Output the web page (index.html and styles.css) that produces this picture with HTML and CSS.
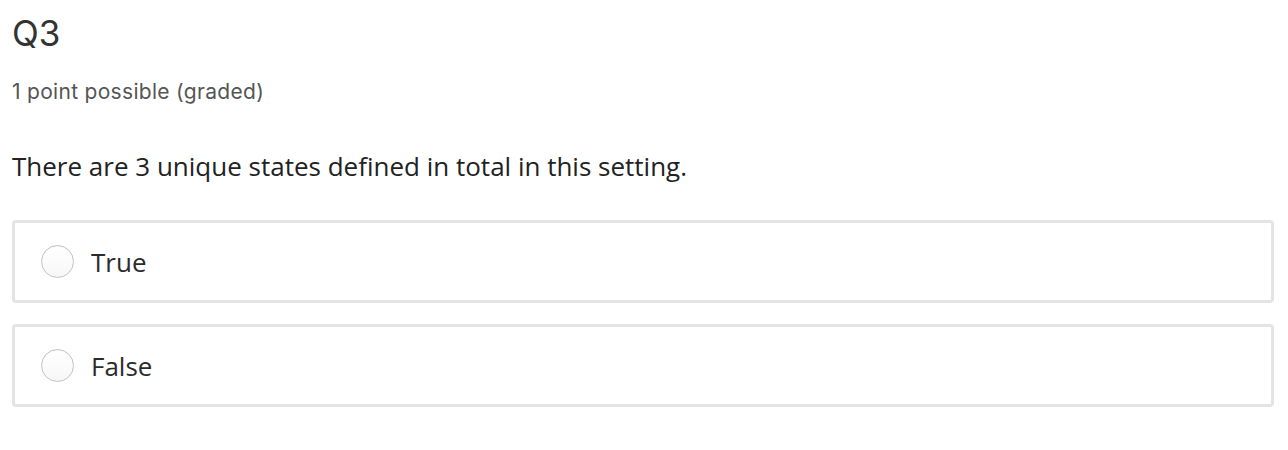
FILE: index.html
```html
<!DOCTYPE html>
<html>
<head>
<meta charset="utf-8">
<link rel="stylesheet" href="styles.css">
</head>
<body>
<div class="problem">
  <h3 class="title">Q3</h3>
  <div class="meta">1 point possible (graded)</div>
  <p class="prompt">There are 3 unique states defined in total in this setting.</p>
  <div class="choices">
    <label class="choice"><span class="radio"></span><span class="label">True</span></label>
    <label class="choice"><span class="radio"></span><span class="label">False</span></label>
  </div>
</div>
</body>
</html>
```
FILE: styles.css
```css
html, body { margin: 0; padding: 0; background: #fff; }
.problem { padding: 0 14px 0 12px; }
.title {
  margin: 0;
  padding-top: 12px;
  font-family: Inter, "Open Sans", sans-serif;
  font-weight: 400;
  font-size: 35px;
  line-height: 42px;
  color: #333;
}
.meta {
  margin-top: 26px;
  font-family: Inter, sans-serif;
  font-size: 21px;
  line-height: 24px;
  letter-spacing: 0.3px;
  color: #555;
}
.prompt {
  margin: 44px 0 0 0;
  font-family: "Open Sans", sans-serif;
  font-size: 26px;
  line-height: 36px;
  color: #222;
}
.choices { margin-top: 36px; display: flex; flex-direction: column; gap: 21px; }
.choice {
  display: flex;
  align-items: center;
  height: 77px;
  border: 3px solid #e4e4e4;
  border-radius: 4px;
  padding-left: 26px;
}
.radio {
  width: 31px; height: 31px;
  border-radius: 50%;
  border: 1px solid #c2c2c2;
  background: linear-gradient(#fff, #f7f7f7);
  box-shadow: inset 0 1px 1px rgba(0,0,0,0.04);
}
.label {
  margin-left: 17px;
  font-family: "Open Sans", sans-serif;
  font-size: 26px;
  color: #2b2b2b;
}
```
